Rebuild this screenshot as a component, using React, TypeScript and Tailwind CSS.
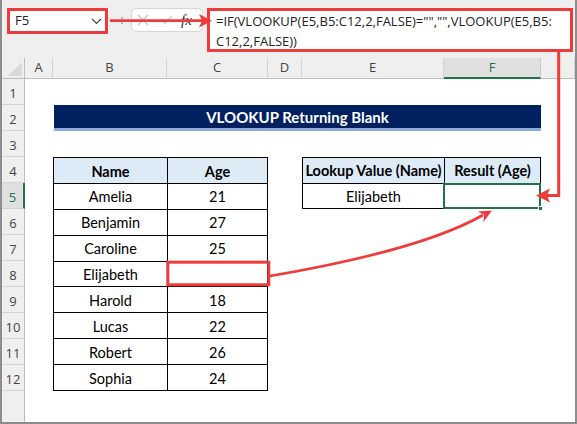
const RED = "#ee3b3b";

const names: [string, string][] = [
  ["Amelia", "21"],
  ["Benjamin", "27"],
  ["Caroline", "25"],
  ["Elijabeth", ""],
  ["Harold", "18"],
  ["Lucas", "22"],
  ["Robert", "26"],
  ["Sophia", "24"],
];

const cols = ["A", "B", "C", "D", "E", "F", "G"];

const cell = "flex items-center justify-center border-b border-r border-black pt-[2px]";
const head = "flex items-center justify-center border-b border-r border-black bg-[#ddebf7] pt-[2px] font-bold";

function TopBar() {
  return (
    <div className="flex h-[58px] shrink-0 items-start pt-2 font-['Open_Sans',sans-serif]">
      <div className="ml-[5px] flex h-[26px] w-[101px] items-center justify-between border-[3px] border-[#ee3b3b] bg-white pl-[5px] pr-[3px] text-[13px] text-[#222]">
        <span>F5</span>
        <svg width="11" height="7" viewBox="0 0 11 7">
          <path d="M1 1 L5.5 5.5 L10 1" fill="none" stroke="#444" strokeWidth="1.2" />
        </svg>
      </div>
      <div className="ml-[8px] mt-[3px] w-[12px] text-center text-[13px] leading-4 text-[#8a8a8a]">:</div>
      <div className="ml-[3px] flex h-[24px] w-[72px] items-center rounded-[5px] border border-[#d6d6d6] bg-white pl-[5px]">
        <svg width="12" height="12" viewBox="0 0 12 12">
          <path d="M1 1 L11 11 M11 1 L1 11" stroke="#c4c4c4" strokeWidth="1.2" />
        </svg>
        <svg className="ml-[11px]" width="13" height="10" viewBox="0 0 13 10">
          <path d="M1 4.5 L5 8.5 L12 1" fill="none" stroke="#c4c4c4" strokeWidth="1.2" />
        </svg>
        <span className="ml-[8px] font-['Liberation_Serif',serif] text-[15px] italic leading-none text-[#333]">
          fx
        </span>
      </div>
      <div className="ml-[4px] mr-[2px] h-[44px] flex-1 border-[3px] border-[#ee3b3b] bg-white pl-[6px] text-[13px] leading-[20px] text-[#222]">
        <div>=IF(VLOOKUP(E5,B5:C12,2,FALSE)="","",VLOOKUP(E5,B5:</div>
        <div>C12,2,FALSE))</div>
      </div>
    </div>
  );
}

function Sheet() {
  return (
    <div className="grid flex-1 grid-cols-[23px_28px_114px_101px_34px_142px_97px_1fr] grid-rows-[21px_repeat(12,26px)_1fr] bg-white font-['Lato',sans-serif]">
      {/* corner */}
      <div className="relative border-b border-r border-[#bdbdbd] bg-[#efefef]">
        <svg className="absolute bottom-[2px] right-[2px]" width="14" height="14" viewBox="0 0 14 14">
          <path d="M14 0 L14 14 L0 14 Z" fill="#d9d9d9" />
        </svg>
      </div>
      {cols.map((c) => (
        <div
          key={c}
          className={
            c === "F"
              ? "flex items-center justify-center border-b-2 border-r border-b-[#217346] border-r-[#c8c8c8] bg-[#e0e0e0] font-['Open_Sans',sans-serif] text-[13px] text-[#217346]"
              : "flex items-center justify-center border-b border-r border-b-[#bdbdbd] border-r-[#d4d4d4] bg-[#efefef] font-['Open_Sans',sans-serif] text-[13px] text-[#444]"
          }
        >
          {c === "G" ? "" : c}
        </div>
      ))}

      {/* row headers */}
      {Array.from({ length: 12 }, (_, i) => (
        <div
          key={i}
          style={{ gridColumn: 1, gridRow: i + 2 }}
          className={
            i === 4
              ? "flex items-end justify-center border-b border-r-2 border-b-[#d4d4d4] border-r-[#217346] bg-[#e0e0e0] pb-[3px] font-['Open_Sans',sans-serif] text-[13px] leading-4 text-[#217346]"
              : "flex items-end justify-center border-b border-r border-b-[#d4d4d4] border-r-[#bdbdbd] bg-[#efefef] pb-[3px] font-['Open_Sans',sans-serif] text-[13px] leading-4 text-[#444]"
          }
        >
          {i + 1}
        </div>
      ))}
      <div style={{ gridColumn: 1, gridRow: 14 }} className="border-r border-[#bdbdbd] bg-[#efefef]" />

      {/* title */}
      <div className="col-start-3 col-end-8 row-start-3 ml-px flex items-center justify-center border-b-[3px] border-[#8ea9db] bg-[#002060] pt-[2px] text-[15px] font-bold text-white">
        VLOOKUP Returning Blank
      </div>

      {/* name / age table */}
      <div className="col-start-3 col-end-5 row-start-5 row-end-14 grid grid-cols-[114px_1fr] grid-rows-9 border-l border-t border-black text-[14.5px] text-black">
        <div className={head}>Name</div>
        <div className={head}>Age</div>
        {names.flatMap(([n, a]) => [
          <div key={n} className={cell}>{n}</div>,
          <div key={n + "a"} className={cell}>{a}</div>,
        ])}
      </div>

      {/* lookup table */}
      <div className="col-start-6 col-end-8 row-start-5 row-end-7 grid grid-cols-[142px_1fr] grid-rows-2 border-l border-t border-black text-[14.5px] text-black">
        <div className={head}>Lookup Value (Name)</div>
        <div className={head}>Result (Age)</div>
        <div className={cell}>Elijabeth</div>
        <div className="relative border-b border-r border-black">
          <div className="absolute -bottom-[1px] -left-[2px] -right-[1px] -top-[1px] border-2 border-[#217346]" />
          <div className="absolute -bottom-[3px] -right-[3px] h-[5px] w-[5px] border border-white bg-[#217346]" />
        </div>
      </div>
    </div>
  );
}

function Annotations() {
  return (
    <svg className="pointer-events-none absolute left-0 top-0" width="577" height="424" viewBox="0 0 577 424">
      <g stroke={RED} fill="none" strokeWidth="2.7">
        <path d="M108 20.7 H200" />
        <path d="M556.7 51 V195.5 H542" strokeWidth="3" />
        <path d="M268 276 Q 420 250 481 215" strokeWidth="2.6" />
        <rect x="165.8" y="262.2" width="101" height="22.6" strokeWidth="3" />
      </g>
      <g fill={RED}>
        <polygon points="197,14 210,20.7 197,27.5 200,20.7" />
        <polygon points="534,195.5 548,188.5 545,195.5 548,202.5" />
        <polygon points="490,210.5 481.5,222.1 482.1,214.8 475.7,211.5" />
      </g>
    </svg>
  );
}

export default function App() {
  return (
    <div className="relative flex h-[424px] w-[577px] flex-col overflow-hidden border-x-2 border-b-2 border-[#8d8d8d] bg-[#efefef]">
      <TopBar />
      <Sheet />
      <Annotations />
    </div>
  );
}
